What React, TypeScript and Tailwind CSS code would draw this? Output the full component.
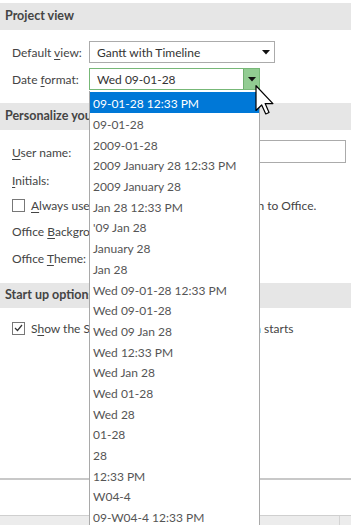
import React from "react";

const items = [
  "09-01-28 12:33 PM",
  "09-01-28",
  "2009-01-28",
  "2009 January 28 12:33 PM",
  "2009 January 28",
  "Jan 28 12:33 PM",
  "'09 Jan 28",
  "January 28",
  "Jan 28",
  "Wed 09-01-28 12:33 PM",
  "Wed 09-01-28",
  "Wed 09 Jan 28",
  "Wed 12:33 PM",
  "Wed Jan 28",
  "Wed 01-28",
  "Wed 28",
  "01-28",
  "28",
  "12:33 PM",
  "W04-4",
  "09-W04-4 12:33 PM",
];

function Caret() {
  return (
    <svg width="8" height="5" viewBox="0 0 8 5">
      <path d="M0 0 H8 L4 4.5 Z" fill="#111" />
    </svg>
  );
}

export default function App() {
  return (
    <div
      className="relative w-[351px] h-[525px] overflow-hidden bg-white text-[12px] text-[#444]"
      style={{ fontFamily: 'Lato, "Noto Sans", sans-serif' }}
    >
      <div className="pt-[3px]">
        <div className="h-[27px] bg-[#e6e6e6] pl-[5px] flex items-center font-bold text-[12.5px] text-[#444] whitespace-nowrap">
          <span>Project view</span>
        </div>
        <div className="pl-[12px] pt-[11px]">
          <div className="flex items-center h-[22px]">
            <div className="w-[77px] whitespace-nowrap pt-[2px]">
              Default <u className="underline-offset-2">v</u>iew:
            </div>
            <div className="w-[186px] h-[22px] border border-[#ababab] flex items-center justify-between pl-[7px] pr-[4px] text-[#333]">
              <span className="pt-[1px]">Gantt with Timeline</span>
              <Caret />
            </div>
          </div>
          <div className="flex items-center h-[22px] mt-[5px]">
            <div className="w-[77px] whitespace-nowrap pt-[2px]">
              Date <u className="underline-offset-2">f</u>ormat:
            </div>
            <div className="w-[171px] h-[22px] border border-[#77b877] flex items-stretch text-[#333]">
              <div className="flex-1 flex items-center pl-[7px]">
                <span className="pt-[1px]">Wed 09-01-28</span>
              </div>
              <div className="w-[16px] bg-[#92cc92] border-l border-[#6fae6f] flex items-center justify-center">
                <Caret />
              </div>
            </div>
          </div>
        </div>
        <div className="mt-[13px] h-[27px] bg-[#e6e6e6] pl-[5px] flex items-center font-bold text-[12.5px] text-[#444] whitespace-nowrap">
          <span>Personalize your copy of Microsoft Office</span>
        </div>
        <div className="pl-[12px] pt-[10px]">
          <div className="flex items-center h-[23px]">
            <div className="w-[77px] whitespace-nowrap pt-[2px]">
              <u className="underline-offset-2">U</u>ser name:
            </div>
            <div className="w-[257px] h-[23px] border border-[#ababab]" />
          </div>
          <div className="flex items-center h-[20px] mt-[7px] pt-[2px]">
            <span>
              <u className="underline-offset-2">I</u>nitials:
            </span>
          </div>
          <div className="flex items-center h-[20px] mt-[5px] whitespace-nowrap">
            <div className="w-[13px] h-[13px] border border-[#777] bg-white" />
            <span className="ml-[6px] pt-[2px]">
              <u className="underline-offset-2">A</u>lways use these values regardless of sign in to Office.
            </span>
          </div>
          <div className="flex items-center h-[20px] mt-[6px] whitespace-nowrap pt-[2px]">
            <span>
              Office <u className="underline-offset-2">B</u>ackground:
            </span>
          </div>
          <div className="flex items-center h-[20px] mt-[7px] whitespace-nowrap pt-[2px]">
            <span>
              Office <u className="underline-offset-2">T</u>heme:
            </span>
          </div>
        </div>
        <div className="mt-[15px] h-[25px] bg-[#e6e6e6] pl-[5px] flex items-center font-bold text-[12.5px] text-[#444] whitespace-nowrap">
          <span>Start up options</span>
        </div>
        <div className="pl-[12px] mt-[10px]">
          <div className="flex items-center h-[20px] whitespace-nowrap">
            <div className="w-[13px] h-[13px] border border-[#777] bg-white flex items-center justify-center">
              <svg width="9" height="8" viewBox="0 0 9 8">
                <path d="M1 4 L3.5 6.5 L8 1" stroke="#333" strokeWidth="1.2" fill="none" />
              </svg>
            </div>
            <span className="ml-[6px] pt-[2px]">
              S<u className="underline-offset-2">h</u>ow the Start screen when this application starts
            </span>
          </div>
        </div>
        <div className="mt-[140px] h-[2px] bg-[#c8c8c8]" />
        <div className="mt-[35px] h-[12px] border-t border-[#cfcfcf] bg-[#ececec] flex justify-end">
          <div className="w-[12px] border-l border-[#d4d4d4]" />
        </div>
      </div>

      {/* Dropdown list overlay */}
      <div className="absolute left-[89px] top-[91px] w-[171px] h-[450px] bg-white border-x border-[#a9a9a9] pt-[1px]">
        {items.map((t, i) => (
          <div
            key={i}
            className={`h-[20.7px] flex items-center pl-[3px] pt-[4px] whitespace-nowrap ${
              i === 0 ? "bg-[#0078d7] text-white" : "text-[#555]"
            }`}
          >
            <span>{t}</span>
          </div>
        ))}
      </div>

      {/* Mouse cursor */}
      <svg
        className="absolute left-[255px] top-[85px]"
        width="20"
        height="30"
        viewBox="0 0 13 20"
      >
        <path
          d="M0.5 0.5 L0.5 17 L4.3 13.3 L7 19.3 L9.2 18.3 L6.6 12.4 L11.8 12.4 Z"
          fill="#fff"
          stroke="#000"
          strokeWidth="0.8"
          strokeLinejoin="round"
        />
      </svg>
    </div>
  );
}
